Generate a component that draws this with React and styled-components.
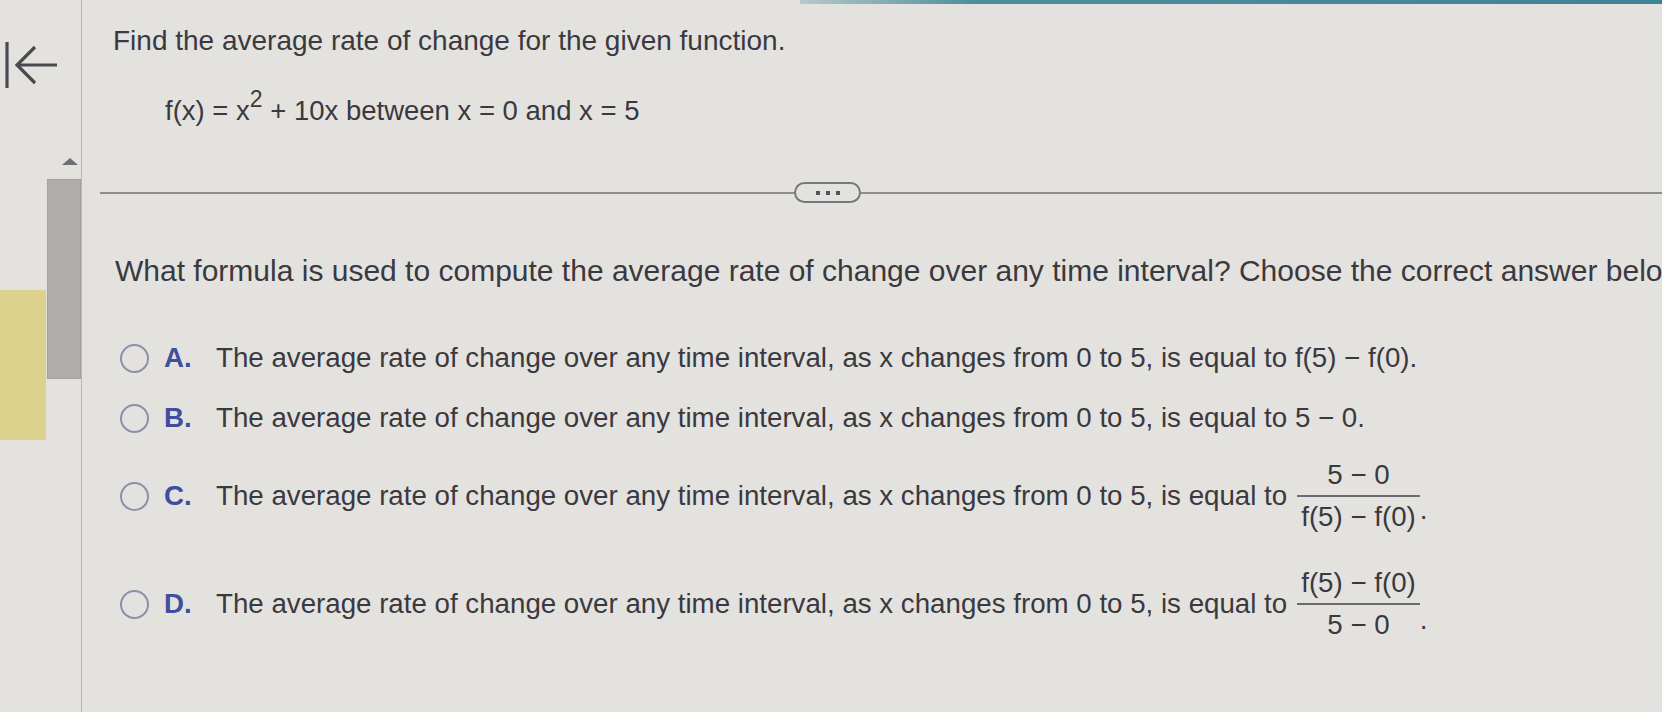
import React from "react";
import styled, { createGlobalStyle } from "styled-components";

const Global = createGlobalStyle`
  html, body { margin: 0; padding: 0; }
  body {
    background: #e4e2de;
    font-family: "Liberation Sans", Arial, sans-serif;
    color: #3a3940;
    overflow: hidden;
  }
`;

const Page = styled.div`
  display: flex;
  width: 1662px;
  height: 712px;
  overflow: hidden;
  background: #e4e2de;
`;

const Sidebar = styled.div`
  width: 81px;
  flex-shrink: 0;
  border-right: 1px solid #b9b7b3;
  display: flex;
  flex-direction: column;
`;

const BackButton = styled.button`
  margin-top: 38px;
  margin-left: 2px;
  width: 56px;
  height: 54px;
  padding: 0;
  border: none;
  background: transparent;
  color: #4a4950;
  display: flex;
  align-items: center;
  justify-content: flex-start;
`;

const SideBody = styled.div`
  display: flex;
  margin-top: 58px;
`;

const Highlight = styled.div`
  width: 46px;
  height: 150px;
  margin-top: 140px;
  background: #ddd28c;
`;

const Track = styled.div`
  width: 35px;
  display: flex;
  flex-direction: column;
  align-items: center;
`;

const ScrollArrow = styled.div`
  width: 0;
  height: 0;
  border-left: 8px solid transparent;
  border-right: 8px solid transparent;
  border-bottom: 7px solid #6e6d72;
  margin-top: 8px;
  margin-left: 12px;
`;

const Thumb = styled.div`
  width: 32px;
  height: 198px;
  margin-top: 14px;
  background: #aeada9;
  border: 1px solid #a3a29e;
`;

const Main = styled.div`
  flex: 1;
  display: flex;
  flex-direction: column;
  min-width: 0;
`;

const TopStrip = styled.div`
  height: 4px;
  margin-left: 718px;
  background: linear-gradient(90deg, #b8c9c9 0%, #4d8f9c 20%, #3e8496 100%);
`;

const Content = styled.div`
  padding-left: 31px;
  display: flex;
  flex-direction: column;
`;

const Title = styled.div`
  margin-top: 21px;
  font-size: 28px;
  line-height: 32px;
  white-space: nowrap;
`;

const Formula = styled.div`
  margin-top: 39px;
  margin-left: 52px;
  font-size: 27.5px;
  line-height: 30px;
  white-space: nowrap;
  sup {
    font-size: 23px;
    line-height: 0;
    vertical-align: 13px;
  }
`;

const Divider = styled.div`
  margin-top: 56px;
  margin-left: -13px;
  display: flex;
  align-items: center;
`;

const Rule = styled.div`
  height: 2px;
  background: #8e8d8c;
  flex: ${(p) => (p.$grow ? 1 : "none")};
  width: ${(p) => (p.$grow ? "auto" : "694px")};
`;

const Pill = styled.div`
  width: 63px;
  height: 17px;
  border: 2px solid #77767a;
  border-radius: 11px;
  display: flex;
  align-items: center;
  justify-content: center;
  gap: 6px;
  span {
    width: 4px;
    height: 4px;
    background: #55545a;
  }
`;

const Question = styled.div`
  margin-top: 52px;
  margin-left: 2px;
  font-size: 30px;
  line-height: 32px;
  white-space: nowrap;
`;

const Options = styled.div`
  display: flex;
  flex-direction: column;
  margin-top: 41px;
  margin-left: 7px;
`;

const Option = styled.div`
  display: flex;
  align-items: center;
  height: ${(p) => p.$h}px;
  white-space: nowrap;
  font-size: 27.7px;
`;

const Radio = styled.span`
  width: 25px;
  height: 25px;
  border: 2px solid #8c90a8;
  border-radius: 50%;
  flex-shrink: 0;
`;

const Letter = styled.span`
  width: 52px;
  margin-left: 15px;
  font-weight: bold;
  color: #3d4f9e;
`;

const Fraction = styled.span`
  display: inline-flex;
  flex-direction: column;
  align-items: stretch;
  text-align: center;
  margin-left: 10px;
  line-height: 32px;
`;

const Num = styled.span`
  padding: 0 4px 4px;
  border-bottom: 2px solid #6b6a6e;
`;

const Den = styled.span`
  padding: 4px 4px 0;
`;

const Period = styled.span`
  align-self: flex-end;
  margin-bottom: ${(p) => p.$drop}px;
`;

function BackIcon() {
  return (
    <svg width="56" height="54" viewBox="0 0 56 54" fill="none" stroke="currentColor" strokeWidth="3.2">
      <line x1="5" y1="4" x2="5" y2="50" />
      <path d="M33 9 L15 27 L33 45" strokeLinejoin="miter" />
      <line x1="15" y1="27" x2="55" y2="27" />
    </svg>
  );
}

const stem = "The average rate of change over any time interval, as x changes from 0 to 5, is equal to";

export default function App() {
  return (
    <Page>
      <Global />
      <Sidebar>
        <BackButton aria-label="Back">
          <BackIcon />
        </BackButton>
        <SideBody>
          <Highlight />
          <Track>
            <ScrollArrow />
            <Thumb />
          </Track>
        </SideBody>
      </Sidebar>
      <Main>
        <TopStrip />
        <Content>
          <Title>Find the average rate of change for the given function.</Title>
          <Formula>
            f(x) = x<sup>2</sup> + 10x between x = 0 and x = 5
          </Formula>
          <Divider>
            <Rule />
            <Pill>
              <span />
              <span />
              <span />
            </Pill>
            <Rule $grow />
          </Divider>
          <Question>
            What formula is used to compute the average rate of change over any time interval? Choose the correct answer below.
          </Question>
          <Options>
            <Option $h={60}>
              <Radio />
              <Letter>A.</Letter>
              {stem} f(5) − f(0).
            </Option>
            <Option $h={60}>
              <Radio />
              <Letter>B.</Letter>
              {stem} 5 − 0.
            </Option>
            <Option $h={96}>
              <Radio />
              <Letter>C.</Letter>
              {stem}
              <Fraction>
                <Num>5 − 0</Num>
                <Den>f(5) − f(0)</Den>
              </Fraction>
              <Period $drop={18}>.</Period>
            </Option>
            <Option $h={120}>
              <Radio />
              <Letter>D.</Letter>
              {stem}
              <Fraction>
                <Num>f(5) − f(0)</Num>
                <Den>5 − 0</Den>
              </Fraction>
              <Period $drop={28}>.</Period>
            </Option>
          </Options>
        </Content>
      </Main>
    </Page>
  );
}
